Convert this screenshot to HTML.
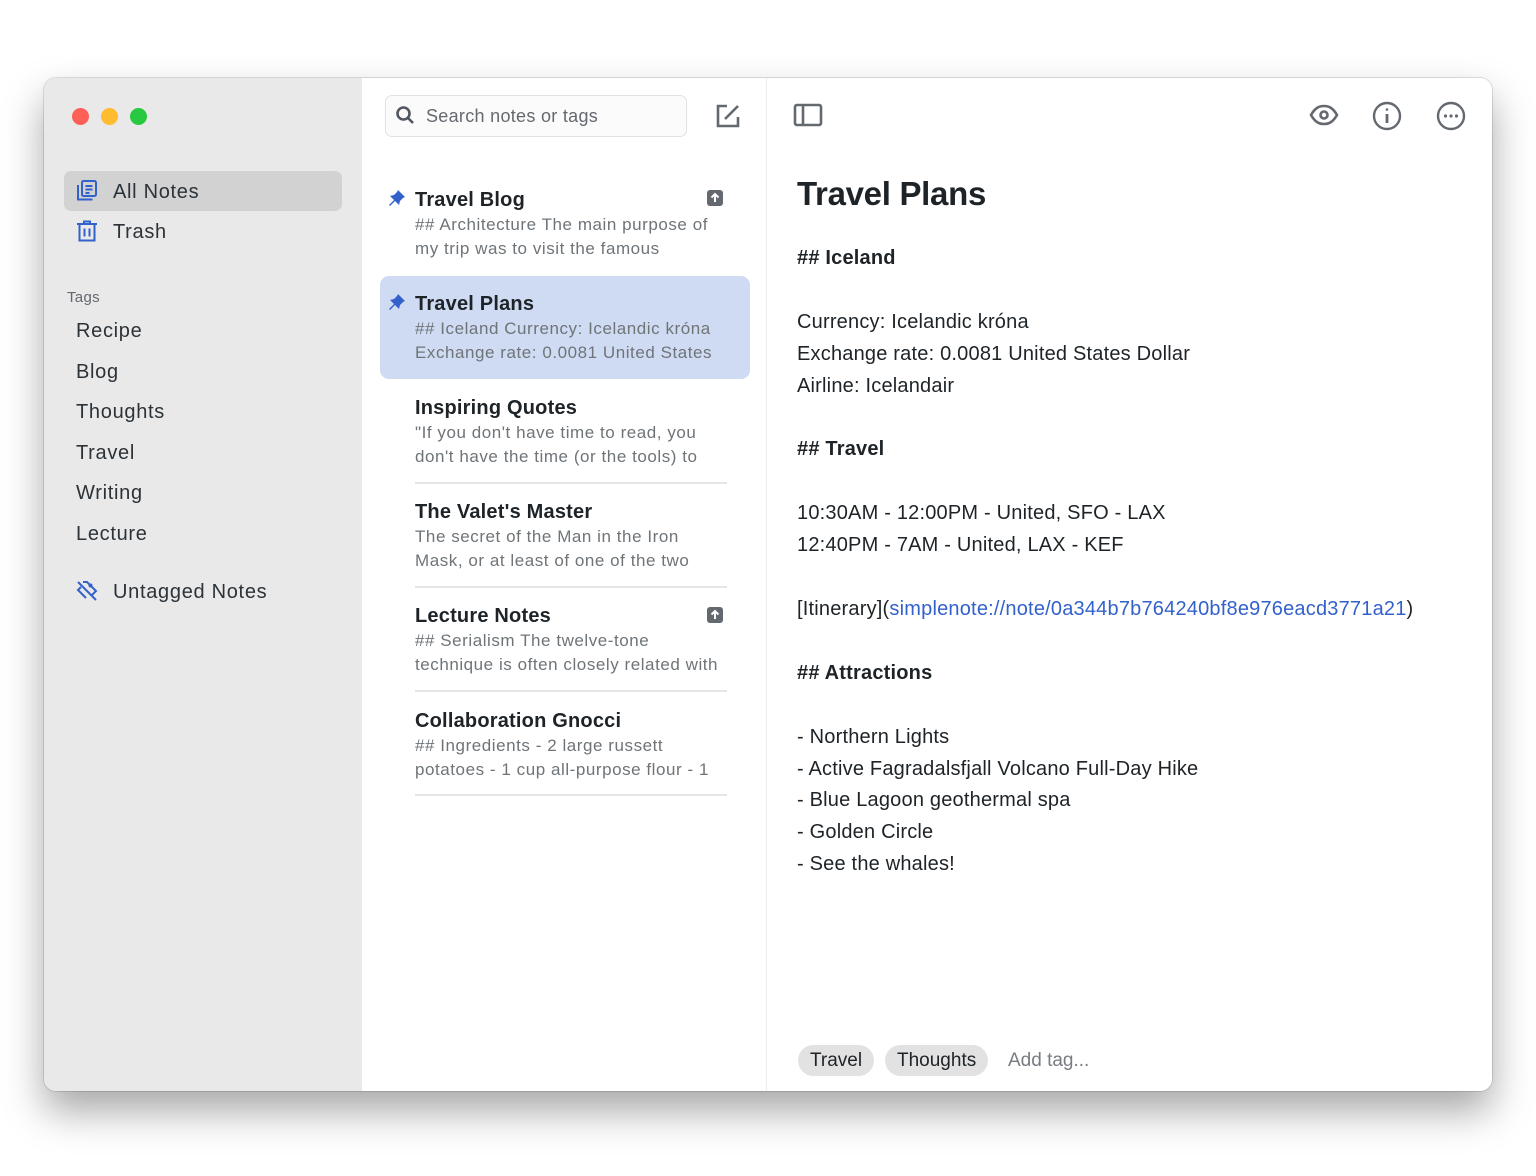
<!DOCTYPE html>
<html><head><meta charset="utf-8"><style>
*{margin:0;padding:0;box-sizing:border-box}
body{width:1536px;height:1176px;background:#fff;font-family:"Liberation Sans",sans-serif;position:relative;overflow:hidden}
.win{position:absolute;left:44px;top:78px;width:1448px;height:1013px;border-radius:12px;overflow:hidden;background:#fff;box-shadow:0 20px 40px rgba(0,0,0,.35),0 0 0 1px rgba(0,0,0,.12)}
.side{position:absolute;left:0;top:0;width:318px;height:100%;background:#e9e9e9}
.list{position:absolute;left:318px;top:0;width:405px;height:100%;background:#fff;border-right:1.5px solid #ececec}
.ed{position:absolute;left:724px;top:0;right:0;height:100%;background:#fff}
.a{position:absolute;white-space:nowrap}
.dot{position:absolute;top:30px;width:17px;height:17px;border-radius:50%}
.si{font-size:20px;color:#2c3338;letter-spacing:.7px}
.nt{font-size:20px;font-weight:bold;color:#1d2327;letter-spacing:.2px}
.np{font-size:17px;color:#6e7478;line-height:23.5px;letter-spacing:.55px}
.sep{position:absolute;left:53px;width:312px;height:2px;background:#e6e6e6}
.et{font-size:20px;color:#1d2327;line-height:31.9px;letter-spacing:.2px}
.tag{position:absolute;top:967px;height:31px;border-radius:16px;background:#e2e2e2;font-size:19px;color:#1d2327;line-height:31px;padding:0 12px}
</style></head><body>
<div class="win">
<div class="side">
<div class="dot" style="left:28px;background:#fe5f57"></div>
<div class="dot" style="left:57px;background:#febc2e"></div>
<div class="dot" style="left:86px;background:#28c840"></div>
<div class="a" style="left:20px;top:93px;width:278px;height:40px;background:#d2d2d2;border-radius:7px"></div>
<svg class="a" style="left:31px;top:101px" width="24" height="24" viewBox="0 0 24 24" fill="none" stroke="#3361cc" stroke-width="2"><rect x="7" y="2" width="14" height="15" rx="1.5"/><path d="M3 6v14.5h14.5M10.5 7h7M10.5 10.5h7M10.5 14h4"/></svg>
<div class="a si" style="left:69px;top:103px">All Notes</div>
<svg class="a" style="left:31px;top:141px" width="24" height="24" viewBox="0 0 24 24" fill="none" stroke="#3361cc" stroke-width="2"><path d="M2 5h20M9 5V2.5h6V5M4.5 5v16.5h15V5M9.5 9.5v8M14.5 9.5v8"/></svg>
<div class="a si" style="left:69px;top:143px">Trash</div>
<div class="a" style="left:23px;top:211px;font-size:15px;color:#646970;letter-spacing:.3px">Tags</div>
<div class="a si" style="left:32px;top:242px">Recipe</div>
<div class="a si" style="left:32px;top:283px">Blog</div>
<div class="a si" style="left:32px;top:323px">Thoughts</div>
<div class="a si" style="left:32px;top:364px">Travel</div>
<div class="a si" style="left:32px;top:404px">Writing</div>
<div class="a si" style="left:32px;top:445px">Lecture</div>
<svg class="a" style="left:31px;top:501px" width="24" height="24" viewBox="0 0 24 24" fill="none" stroke="#3361cc" stroke-width="2"><path d="M3 3l18 18M8 3h4l9 9-5 5M11 19l-8-8 3-3"/><circle cx="15.5" cy="6.5" r="1"/></svg>
<div class="a si" style="left:69px;top:503px">Untagged Notes</div>
</div>
<div class="list">
<div class="a" style="left:23px;top:17px;width:302px;height:42px;border:1px solid #e2e2e2;border-radius:7px;background:#fbfbfb"></div>
<svg class="a" style="left:33px;top:27px" width="22" height="22" viewBox="0 0 22 22" fill="none" stroke="#50575e" stroke-width="2.6"><circle cx="8.5" cy="8.5" r="6"/><path d="M13 13l5 5"/></svg>
<div class="a" style="left:64px;top:28px;font-size:18px;color:#646970;letter-spacing:.3px">Search notes or tags</div>
<svg class="a" style="left:352px;top:24px" width="28" height="28" viewBox="0 0 28 28" fill="none" stroke="#646970" stroke-width="2.6"><path d="M13 4H4v20h20v-9M11 17l13-13"/></svg>
<div class="a" style="left:18px;top:198px;width:370px;height:103px;background:#cfdbf2;border-radius:9px"></div>
<svg class="a" style="left:26px;top:111px" width="18" height="18" viewBox="0 0 18 18"><path fill="#3361cc" d="M10 1l7 7-2 1-3 3-1 4-4-4-5 5-1-1 5-5-4-4 4-1 3-3z"/></svg>
<svg class="a" style="left:26px;top:215px" width="18" height="18" viewBox="0 0 18 18"><path fill="#3361cc" d="M10 1l7 7-2 1-3 3-1 4-4-4-5 5-1-1 5-5-4-4 4-1 3-3z"/></svg>
<div class="a nt" style="left:53px;top:111px">Travel Blog</div>
<div class="a np" style="left:53px;top:135px">## Architecture The main purpose of<br>my trip was to visit the famous</div>
<div class="a nt" style="left:53px;top:215px">Travel Plans</div>
<div class="a np" style="left:53px;top:239px">## Iceland Currency: Icelandic króna<br>Exchange rate: 0.0081 United States</div>
<div class="a nt" style="left:53px;top:319px">Inspiring Quotes</div>
<div class="a np" style="left:53px;top:343px">"If you don't have time to read, you<br>don't have the time (or the tools) to</div>
<div class="sep" style="top:404px"></div>
<div class="a nt" style="left:53px;top:423px">The Valet's Master</div>
<div class="a np" style="left:53px;top:447px">The secret of the Man in the Iron<br>Mask, or at least of one of the two</div>
<div class="sep" style="top:508px"></div>
<div class="a nt" style="left:53px;top:527px">Lecture Notes</div>
<div class="a np" style="left:53px;top:551px">## Serialism The twelve-tone<br>technique is often closely related with</div>
<div class="sep" style="top:612px"></div>
<div class="a nt" style="left:53px;top:632px">Collaboration Gnocci</div>
<div class="a np" style="left:53px;top:656px">## Ingredients - 2 large russett<br>potatoes - 1 cup all-purpose flour - 1</div>
<div class="sep" style="top:716px"></div>
<svg class="a" style="left:345px;top:112px" width="16" height="16" viewBox="0 0 16 16"><rect width="16" height="16" rx="3" fill="#646970"/><path d="M8 12V4M4.5 7.5L8 4l3.5 3.5" stroke="#fff" stroke-width="2" fill="none"/></svg>
<svg class="a" style="left:345px;top:529px" width="16" height="16" viewBox="0 0 16 16"><rect width="16" height="16" rx="3" fill="#646970"/><path d="M8 12V4M4.5 7.5L8 4l3.5 3.5" stroke="#fff" stroke-width="2" fill="none"/></svg>
</div>
<div class="ed">
<svg class="a" style="left:25px;top:25px" width="30" height="24" viewBox="0 0 30 24" fill="none" stroke="#646970" stroke-width="2.6"><rect x="2" y="2" width="26" height="20" rx="2"/><path d="M10 2v20"/></svg>
<svg class="a" style="left:541px;top:24px" width="30" height="26" viewBox="0 0 30 26" fill="none" stroke="#646970" stroke-width="2.6"><path d="M2 13C6 6 10 4 15 4s9 2 13 9c-4 7-8 9-13 9S6 20 2 13z"/><circle cx="15" cy="13" r="3.5"/></svg>
<svg class="a" style="left:604px;top:23px" width="30" height="30" viewBox="0 0 30 30" fill="none" stroke="#646970" stroke-width="2.4"><circle cx="15" cy="15" r="13"/><path d="M15 13v9" stroke-width="2.8"/><circle cx="15" cy="8.5" r="1.3" fill="#646970" stroke="none"/></svg>
<svg class="a" style="left:668px;top:23px" width="30" height="30" viewBox="0 0 30 30" fill="none" stroke="#646970" stroke-width="2.4"><circle cx="15" cy="15" r="13"/><circle cx="9.5" cy="15" r="1.6" fill="#646970" stroke="none"/><circle cx="15" cy="15" r="1.6" fill="#646970" stroke="none"/><circle cx="20.5" cy="15" r="1.6" fill="#646970" stroke="none"/></svg>
<div class="a" style="left:29px;top:97px;font-size:33px;font-weight:bold;color:#1d2327;letter-spacing:-.3px">Travel Plans</div>
<div class="a et" style="left:29px;top:165px"><b>## Iceland</b><br><br>Currency: Icelandic króna<br>Exchange rate: 0.0081 United States Dollar<br>Airline: Icelandair<br><br><b>## Travel</b><br><br>10:30AM - 12:00PM - United, SFO - LAX<br>12:40PM - 7AM - United, LAX - KEF<br><br>[Itinerary](<span style="color:#3361cc">simplenote://note/0a344b7b764240bf8e976eacd3771a21</span>)<br><br><b>## Attractions</b><br><br>- Northern Lights<br>- Active Fagradalsfjall Volcano Full-Day Hike<br>- Blue Lagoon geothermal spa<br>- Golden Circle<br>- See the whales!</div>
<div class="tag" style="left:30px">Travel</div>
<div class="tag" style="left:117px">Thoughts</div>
<div class="a" style="left:240px;top:967px;font-size:19px;color:#787c82;line-height:31px">Add tag...</div>
</div>
</div>
</body></html>
